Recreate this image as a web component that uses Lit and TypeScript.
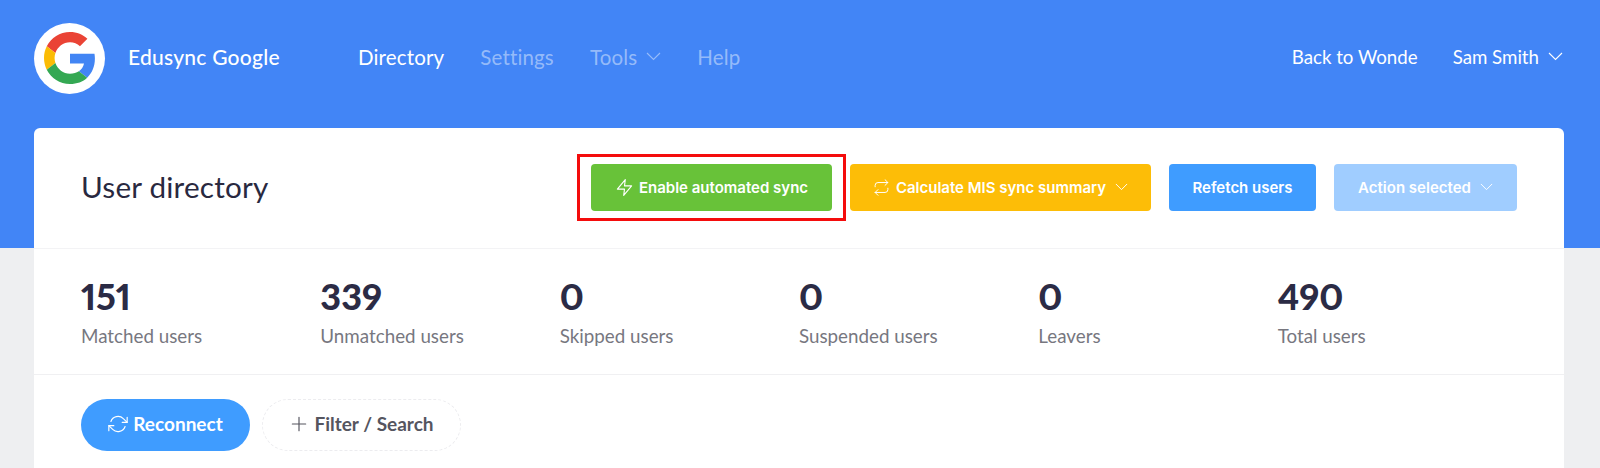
import { LitElement, html, css, svg } from "lit";
import { customElement } from "lit/decorators.js";

const chevron = svg`<path d="M1 1l6.5 6.5L14 1" fill="none" stroke="currentColor" stroke-width="1.1"/>`;
const chev = html`<svg class="chev" viewBox="0 0 15 9">${chevron}</svg>`;

@customElement("app-root")
export class AppRoot extends LitElement {
  static styles = css`
    :host { display: block; height: 468px; overflow: hidden; background: #eeeff1; position: relative; font-family: "Lato", "Liberation Sans", sans-serif; color: #29293f; }
    .hero { background: #4285f6; height: 248px; padding: 22px 34px 0; box-sizing: border-box; }
    .nav { display: flex; align-items: center; height: 72px; color: #fff; font-size: 20.5px; }
    .logo { width: 71px; height: 71px; border-radius: 50%; background: #fff; display: flex; align-items: center; justify-content: center; flex: none; }
    .logo svg { width: 52px; height: 52px; }
    .brand { margin: 0 0 3px 23px; font-weight: 500; width: 230px; font-size: 21px; letter-spacing: .25px; }
    .links { display: flex; gap: 36px; align-items: center; flex: 1; margin-bottom: 3px; letter-spacing: .15px; }
    .dim { color: rgba(255,255,255,.45); }
    .item { display: flex; align-items: center; gap: 9px; }
    .chev { width: 15px; height: 9px; flex: none; }
    .right { display: flex; gap: 35px; margin: 0 3px 3px 0; font-size: 18.7px; align-items: center; }
    .card { margin: -120px 36px 0 34px; background: #fff; border-radius: 6px 6px 0 0; position: relative; }
    .head { height: 121px; padding: 0 47px 4px; box-sizing: border-box; display: flex; align-items: center; border-bottom: 1px solid #f3f3f5; }
    h1 { margin: 0; font-size: 29.7px; font-weight: 400; flex: 1; letter-spacing: .2px; }
    .btns { display: flex; gap: 18px; font-family: "Inter", sans-serif; margin-top: 2px; }
    .btn { height: 47px; border-radius: 4px; color: #fff; font-size: 15px; font-weight: 600; display: flex; align-items: center; justify-content: center; gap: 6px; box-sizing: border-box; position: relative; }
    .btn svg.ic { width: 17px; height: 17px; fill: none; stroke: #fff; stroke-width: 1.4; stroke-linecap: round; stroke-linejoin: round; }
    .btn svg.zap { width: 19px; height: 19px; margin-right: -1px; }
    .green { background: #68c239; width: 241px; }
    .amber { background: #fdbd07; width: 301px; }
    .blue { background: #3f9cff; width: 147px; }
    .pale { background: #a0cdff; width: 183px; gap: 9px; }
    .amber .chev { margin-left: 3px; }
    .pale .chev, .amber .chev { width: 13px; height: 8px; }
    .mark { position: absolute; left: -14px; right: -14px; top: -10px; bottom: -10px; border: 3px solid #f40c0c; pointer-events: none; }
    .stats { display: grid; grid-template-columns: repeat(6, 1fr); padding: 25px 47px 0; height: 126px; box-sizing: border-box; border-bottom: 1px solid #f0f0f2; }
    .num { font-size: 36px; font-weight: 900; line-height: 44px; font-variant-numeric: proportional-nums; color: #2b2b45; }
    .lbl { font-size: 18.8px; color: #77777f; margin-top: 7px; line-height: 22px; }
    .tools { display: flex; gap: 12px; padding: 24px 47px; }
    .pill { height: 52px; border-radius: 26px; display: flex; align-items: center; justify-content: center; gap: 5px; font-size: 19px; font-weight: 700; box-sizing: border-box; padding-bottom: 3px; }
    .pill svg { width: 20px; height: 20px; fill: none; stroke: currentColor; stroke-width: 1.4; stroke-linecap: round; stroke-linejoin: round; }
    .rec { width: 169px; background: #3f9cff; color: #fff; }
    .flt { width: 199px; border: 1px dashed #ececef; color: #55555f; gap: 5px; }
  `;

  render() {
    const stats = [["151","Matched users"],["339","Unmatched users"],["0","Skipped users"],["0","Suspended users"],["0","Leavers"],["490","Total users"]];
    return html`
      <div class="hero">
        <div class="nav">
          <div class="logo"><svg viewBox="0 0 48 48">
            <path fill="#EA4335" d="M24 9.5c3.54 0 6.71 1.22 9.21 3.6l6.85-6.85C35.9 2.38 30.47 0 24 0 14.62 0 6.51 5.38 2.56 13.22l7.98 6.19C12.43 13.72 17.74 9.5 24 9.5z"/>
            <path fill="#4285F4" d="M46.98 24.55c0-1.57-.15-3.09-.38-4.55H24v9.02h12.94c-.58 2.96-2.26 5.48-4.78 7.18l7.73 6c4.51-4.18 7.09-10.36 7.09-17.65z"/>
            <path fill="#FBBC05" d="M10.53 28.59c-.48-1.45-.76-2.99-.76-4.59s.27-3.14.76-4.59l-7.98-6.19C.92 16.46 0 20.12 0 24c0 3.88.92 7.54 2.56 10.78l7.97-6.19z"/>
            <path fill="#34A853" d="M24 48c6.48 0 11.93-2.13 15.89-5.81l-7.73-6c-2.15 1.45-4.92 2.3-8.16 2.3-6.26 0-11.57-4.22-13.47-9.91l-7.98 6.19C6.51 42.62 14.62 48 24 48z"/>
          </svg></div>
          <div class="brand">Edusync Google</div>
          <div class="links">
            <span>Directory</span>
            <span class="dim">Settings</span>
            <span class="item dim">Tools ${chev}</span>
            <span class="dim">Help</span>
          </div>
          <div class="right">
            <span>Back to Wonde</span>
            <span class="item">Sam Smith ${chev}</span>
          </div>
        </div>
      </div>
      <div class="card">
        <div class="head">
          <h1>User directory</h1>
          <div class="btns">
            <div class="btn green"><svg class="ic zap" viewBox="0 0 24 24"><path d="M13 2L3 14h9l-1 8 10-12h-9l1-8z"/></svg>Enable automated sync<span class="mark"></span></div>
            <div class="btn amber"><svg class="ic" viewBox="0 0 24 24"><path d="M17 1l4 4-4 4"/><path d="M3 11V9a4 4 0 0 1 4-4h14"/><path d="M7 23l-4-4 4-4"/><path d="M21 13v2a4 4 0 0 1-4 4H3"/></svg>Calculate MIS sync summary ${chev}</div>
            <div class="btn blue">Refetch users</div>
            <div class="btn pale">Action selected ${chev}</div>
          </div>
        </div>
        <div class="stats">
          ${stats.map(([n,l]) => html`<div><div class="num">${n}</div><div class="lbl">${l}</div></div>`)}
        </div>
        <div class="tools">
          <div class="pill rec"><svg viewBox="0 0 24 24"><path d="M23 4v6h-6"/><path d="M1 20v-6h6"/><path d="M3.5 9a9 9 0 0 1 14.9-3.4L23 10M1 14l4.6 4.4A9 9 0 0 0 20.5 15"/></svg>Reconnect</div>
          <div class="pill flt"><svg viewBox="0 0 24 24"><path d="M12 4v16M4 12h16"/></svg>Filter / Search</div>
        </div>
      </div>
    `;
  }
}
